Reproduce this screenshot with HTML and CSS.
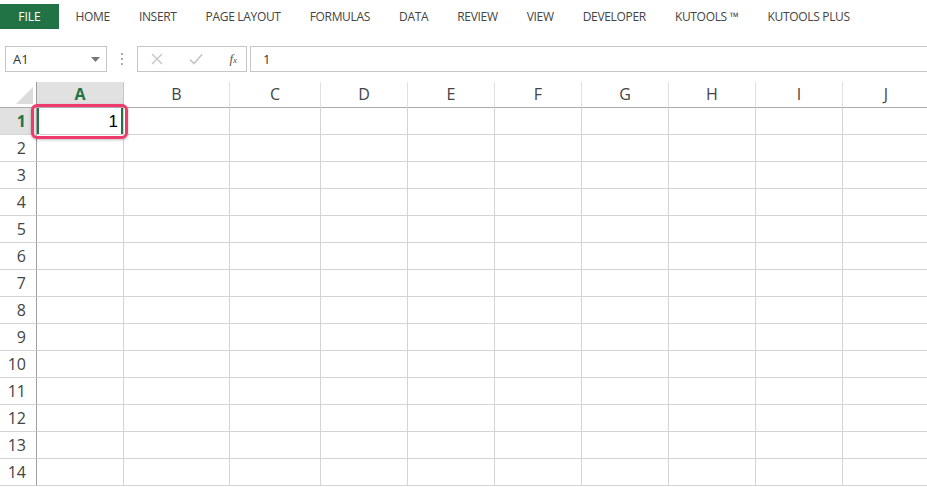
FILE: index.html
```html
<!DOCTYPE html>
<html lang="en">
<head>
  <meta charset="UTF-8" />
  <title>Book1 - Excel</title>
  <link rel="stylesheet" href="styles.css">
</head>
<body>
  <nav class="tabs">
    <span class="tab file">FILE</span>
    <span class="tab">HOME</span>
    <span class="tab">INSERT</span>
    <span class="tab">PAGE LAYOUT</span>
    <span class="tab">FORMULAS</span>
    <span class="tab">DATA</span>
    <span class="tab">REVIEW</span>
    <span class="tab">VIEW</span>
    <span class="tab">DEVELOPER</span>
    <span class="tab">KUTOOLS ™</span>
    <span class="tab">KUTOOLS PLUS</span>
  </nav>

  <div class="formula-bar">
    <div class="name-box">
      <span>A1</span>
      <svg width="9" height="5" viewBox="0 0 9 5"><path d="M0 0h9L4.5 5z" fill="#777"/></svg>
    </div>
    <div class="grip"><i></i><i></i><i></i></div>
    <div class="fx-buttons">
      <svg width="12" height="12" viewBox="0 0 12 12"><path d="M1 1l10 10M11 1L1 11" stroke="#c4c4c4" stroke-width="1.4"/></svg>
      <svg width="14" height="12" viewBox="0 0 14 12"><path d="M1 6.5l4 4L13 1.5" stroke="#c4c4c4" stroke-width="1.6" fill="none"/></svg>
      <span class="fx">f<sub>x</sub></span>
    </div>
    <div class="formula-input">1</div>
  </div>

  <div class="sheet">
    <div class="grid" id="grid"></div>
    <div class="callout"></div>
  </div>

  <script>
    (function(){
      const grid = document.getElementById("grid");
      const cols = ["A","B","C","D","E","F","G","H","I","J"];
      let html = '<div class="corner"><span></span></div>';
      cols.forEach(c => {
        html += `<div class="col-head${c==="A"?" active":""}">${c}</div>`;
      });
      for(let r = 1; r <= 14; r++){
        html += `<div class="row-head${r===1?" active":""}">${r}</div>`;
        cols.forEach(c => {
          const val = (r===1 && c==="A") ? "1" : "";
          html += `<div class="cell${val?" selected":""}">${val}</div>`;
        });
      }
      grid.innerHTML = html;
    })();
  </script>
</body>
</html>
```

FILE: styles.css
```css
body {
  margin: 0; background: #fff; overflow: hidden;
  font-family: "Open Sans", "Noto Sans", sans-serif; color: #444;
}
.tabs {
  display: flex; align-items: center;
  height: 33px;
}
.tab {
  font-size: 12px; padding: 0 14.5px; line-height: 25px; white-space: nowrap;
  letter-spacing: -0.32px;
}
.tab.file {
  background: #217346; color: #fff; letter-spacing: 0;
  width: 59px; box-sizing: border-box; text-align: center; padding: 0;
  margin-right: 2px;
}
.formula-bar {
  display: flex; align-items: center;
  margin-top: 13px; height: 26px; padding-left: 5px;
}
.name-box {
  width: 102px; height: 26px; box-sizing: border-box;
  border: 1px solid #c6c6c6; display: flex; align-items: center;
  justify-content: space-between; padding: 0 6px 0 7px;
  font-size: 13px; color: #333;
}
.grip {
  width: 30px; display: flex; flex-direction: column; align-items: center; gap: 3px;
}
.grip i { width: 2px; height: 2px; background: #aaa; display: block; }
.fx-buttons {
  width: 110px; height: 26px; box-sizing: border-box;
  border: 1px solid #c6c6c6; display: flex; align-items: center;
  justify-content: space-between; padding: 0 9px 0 13px;
}
.fx {
  font-family: "Liberation Serif", serif; font-style: italic;
  font-size: 13px; color: #555;
}
.fx sub { font-size: 9px; vertical-align: 0; }
.formula-input {
  flex: 1; height: 26px; box-sizing: border-box; margin-left: 3px;
  border: 1px solid #c6c6c6; border-right: none;
  font-size: 13px; color: #333; line-height: 24px; padding-left: 12px;
}
.sheet { position: relative; margin-top: 10px; }
.grid {
  display: grid;
  grid-template-columns: 37px 87px 106px 91px repeat(6, 87px) 87px;
  grid-auto-rows: 27px;
  grid-template-rows: 26px;
}
.corner {
  border-right: 1px solid #9f9f9f; border-bottom: 1px solid #ababab;
  position: relative;
}
.corner span {
  position: absolute; right: 3px; bottom: 3px;
  width: 0; height: 0;
  border-left: 17px solid transparent; border-bottom: 17px solid #dcdcdc;
}
.col-head {
  border-right: 1px solid #e1e1e1; border-bottom: 1px solid #ababab;
  text-align: center; font-size: 16px; line-height: 25px; color: #444;
}
.col-head.active {
  background: #e1e1e1; color: #217346; font-weight: bold;
  border-right-color: #c6c6c6;
}
.row-head {
  border-right: 1px solid #9f9f9f; border-bottom: 1px solid #d4d4d4;
  text-align: right; padding-right: 10px; font-size: 16px; line-height: 26px; color: #444;
}
.row-head.active { background: #e1e1e1; color: #217346; font-weight: bold; }
.cell {
  border-right: 1px solid #d4d4d4; border-bottom: 1px solid #d4d4d4;
}
.cell.selected {
  box-shadow: inset 2px 0 0 #217346, inset -2px 0 0 #217346;
  text-align: right; padding-right: 5px;
  font-family: "Liberation Sans", sans-serif; font-size: 17px; color: #000;
  line-height: 27px;
}
.callout {
  position: absolute; left: 31px; top: 22px;
  width: 97px; height: 35px; box-sizing: border-box;
  border: 3px solid #ee3a6c; border-radius: 6px;
  box-shadow: 0 1px 3px rgba(0,0,0,0.25);
}
```
